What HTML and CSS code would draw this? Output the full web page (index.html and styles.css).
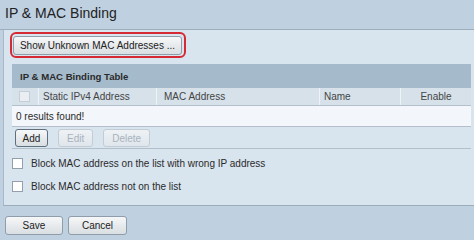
FILE: index.html
```html
<!DOCTYPE HTML>
<html>
<head>
  <title>IP &amp; MAC Binding</title>
  <meta name="viewport" content="width=device-width, initial-scale=1">
  <link rel="stylesheet" href="styles.css">
</head>
<body>
  <h1 class="page-title">IP &amp; MAC Binding</h1>

  <div class="panel">
    <span class="highlight">
      <button class="btn wide">Show Unknown MAC Addresses ...</button>
    </span>

    <div class="binding">
      <div class="binding-title">IP &amp; MAC Binding Table</div>
      <table class="binding-table">
        <tr class="col-head">
          <th class="c-check"><span class="box disabled"></span></th>
          <th class="c-ip">Static IPv4 Address</th>
          <th class="c-mac">MAC Address</th>
          <th class="c-name">Name</th>
          <th class="c-enable">Enable</th>
        </tr>
        <tr class="empty-row">
          <td colspan="5">0 results found!</td>
        </tr>
      </table>
      <div class="actions">
        <button class="btn add">Add</button>
        <button class="btn" disabled>Edit</button>
        <button class="btn" disabled>Delete</button>
      </div>
    </div>

    <label class="check-row"><span class="box"></span>Block MAC address on the list with wrong IP address</label>
    <label class="check-row"><span class="box"></span>Block MAC address not on the list</label>
  </div>

  <div class="footer">
    <button class="btn save">Save</button>
    <button class="btn cancel">Cancel</button>
  </div>
</body>
</html>
```

FILE: styles.css
```css
body {
  margin: 0;
  background: #bfd0e1;
  font-family: "Liberation Sans", Arial, sans-serif;
  font-size: 10px;
  color: #2a2a2a;
}
.page-title {
  margin: 0;
  height: 30px;
  box-sizing: border-box;
  padding: 5px 0 0 5px;
  font-size: 14px;
  font-weight: normal;
  color: #222;
  border-bottom: 1px solid #9cadbc;
}
.panel {
  margin-left: 3px;
  height: 176px;
  box-sizing: border-box;
  padding: 2px 3px 0 8px;
  background: #d8e4ee;
  border-left: 1px solid #a9b9c7;
  border-bottom: 1px solid #9cadbc;
}
.highlight {
  display: inline-block;
  margin-left: -2px;
  padding: 2px 2px 1px 1px;
  border: 2px solid #d52a33;
  border-radius: 6px;
}
.btn {
  height: 19px;
  padding: 0 8px;
  font-family: inherit;
  font-size: 10px;
  color: #222;
  background: linear-gradient(#f6f7f8, #d9dee2);
  border: 1px solid #8f9dab;
  border-radius: 3px;
  vertical-align: top;
}
.btn.wide { width: 169px; padding: 0; }
.btn[disabled] {
  color: #a9b2bb;
  border-color: #c3ccd5;
  background: linear-gradient(#eef2f5, #dfe6ec);
}
.btn.add { width: 33px; padding: 0; border-color: #5f6f7e; }
.binding {
  margin-top: 6px;
  width: 459px;
}
.binding-title {
  height: 24px;
  line-height: 25px;
  padding-left: 8px;
  background: #a5bbcb;
  font-weight: bold;
  font-size: 9.6px;
  color: #2a2a2a;
}
.binding-table {
  width: 100%;
  border-collapse: collapse;
  table-layout: fixed;
}
.col-head th {
  height: 17px;
  padding: 0 0 0 4px;
  text-align: left;
  font-weight: normal;
  color: #444;
  background: #d6e1ea;
  border-left: 1px solid #eef3f7;
  border-bottom: 1px solid #b3c0cc;
}
.col-head th:first-child { border-left: none; }
.c-check { width: 22px; }
.c-ip { width: 113px; }
.c-mac { width: 155px; padding-left: 7px !important; }
.c-name { width: 76px; }
.col-head .c-enable { text-align: center; padding: 0; }
.c-check .box { margin: 0 0 0 3px; }
.empty-row td {
  height: 20px;
  padding: 0 0 0 4px;
  background: #f3f6fa;
  border-bottom: 1px solid #b3c0cc;
}
.actions {
  display: flex;
  gap: 10px;
  height: 22px;
  padding: 2px 0 0 3px;
  box-sizing: border-box;
  border-bottom: 1px solid #b3c0cc;
}
.actions .btn { height: 18px; }
.box {
  display: inline-block;
  width: 9px;
  height: 9px;
  background: #fff;
  border: 1px solid #939fab;
  vertical-align: middle;
}
.box.disabled {
  background: #eaeef2;
  border-color: #c5ced6;
}
.check-row {
  display: flex;
  align-items: center;
  height: 22px;
  margin-top: 3px;
  color: #2a2a2a;
}
.check-row + .check-row { margin-top: 1px; }
.check-row .box { margin-right: 8px; }
.footer {
  display: flex;
  gap: 5px;
  padding: 10px 0 0 5px;
}
.footer .btn { width: 58px; padding: 0; }
.footer .cancel { width: 59px; }
```
